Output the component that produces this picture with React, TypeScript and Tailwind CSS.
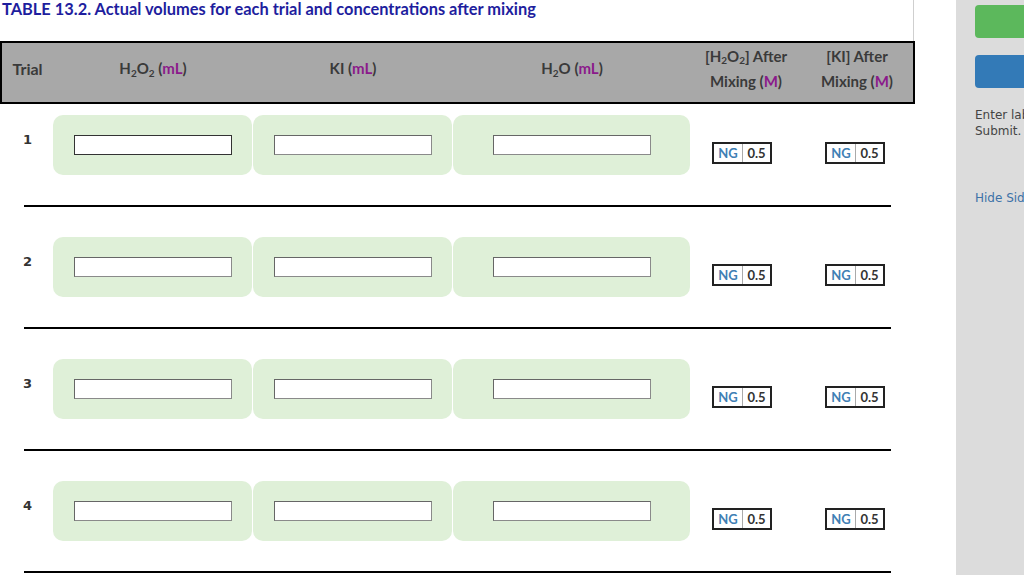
import React from "react";

const calibri = { fontFamily: "Lato, 'Open Sans', sans-serif" };

function Unit({ u }: { u: string }) {
  return (
    <>
      (<span className="text-[#8b1a8b]">{u}</span>)
    </>
  );
}

function Badge() {
  return (
    <div className="flex h-[22px] w-[60px] border-2 border-[#222] bg-white text-[13px] font-bold leading-[18px]" style={calibri}>
      <div className="flex w-[29px] items-center justify-center border-r border-[#aaa] text-[#3f7fb5]">NG</div>
      <div className="flex flex-1 items-center justify-center text-[#333]">0.5</div>
    </div>
  );
}

function GreenBox({ w, first }: { w: string; first?: boolean }) {
  return (
    <div className={`${w} flex h-[60px] justify-center rounded-[10px] bg-[#dff0d8] pt-[20px]`}>
      <div className={`h-[20px] w-[158px] border bg-white ${first ? "border-[#333]" : "border-[#8a8a8a] border-t-[#666] border-l-[#666]"}`} />
    </div>
  );
}

function Row({ n, first }: { n: number; first?: boolean }) {
  return (
    <div className={first ? "pt-[11px]" : "pt-[30px]"}>
      <div className="flex h-[60px]">
        <div className="w-[53px] pl-[23px] pt-[17px] text-[13px] font-bold leading-[16px] text-[#333]" style={{ fontFamily: "'DejaVu Sans', Verdana, sans-serif" }}>
          {n}
        </div>
        <div className="flex gap-[1px]">
          <GreenBox w="w-[199px]" first={first} />
          <GreenBox w="w-[199px]" />
          <GreenBox w="w-[237px]" />
        </div>
        <div className="ml-[22px] pt-[27px]">
          <Badge />
        </div>
        <div className="ml-[53px] pt-[27px]">
          <Badge />
        </div>
      </div>
      <div className="mt-[30px] ml-[24px] h-[2px] w-[867px] bg-black" />
    </div>
  );
}

export default function App() {
  return (
    <div className="flex h-[575px] w-[1024px] overflow-hidden bg-white">
      <div className="w-[956px] shrink-0">
        <div className="h-[41px] w-[914px] border-r border-[#cfcfcf] pl-[2px]">
          <div className="text-[16.4px] font-bold leading-[18px] text-[#1e1e9e]" style={calibri}>
            TABLE 13.2. Actual volumes for each trial and concentrations after mixing
          </div>
        </div>
        <div
          className="grid h-[63px] w-[915px] grid-cols-[51px_200px_200px_238px_110px_112px] items-center border-2 border-black bg-[#a8a8a8] pb-[8px] text-center text-[15px] font-bold leading-[25px] text-[#3a3a3a]"
          style={calibri}
        >
          <div className="text-[16px]">Trial</div>
          <div>
            H<sub className="text-[10px]">2</sub>O<sub className="text-[10px]">2</sub> <Unit u="mL" />
          </div>
          <div>
            KI <Unit u="mL" />
          </div>
          <div>
            H<sub className="text-[10px]">2</sub>O <Unit u="mL" />
          </div>
          <div>
            [H<sub className="text-[10px]">2</sub>O<sub className="text-[10px]">2</sub>] After
            <br />
            Mixing <Unit u="M" />
          </div>
          <div>
            [KI] After
            <br />
            Mixing <Unit u="M" />
          </div>
        </div>
        <Row n={1} first />
        <Row n={2} />
        <Row n={3} />
        <Row n={4} />
      </div>
      <div className="flex-1 overflow-hidden bg-[#dcdcdc] pl-[19px] pt-[5px]">
        <div className="h-[33px] w-[60px] rounded-[4px] bg-[#5cb85c]" />
        <div className="mt-[17px] h-[33px] w-[60px] rounded-[4px] bg-[#337ab7]" />
        <div
          className="mt-[19px] w-[60px] whitespace-nowrap text-[12px] leading-[16px] text-[#444]"
          style={{ fontFamily: "'DejaVu Sans', Verdana, sans-serif" }}
        >
          Enter lab
          <br />
          Submit.
        </div>
        <div
          className="mt-[51px] whitespace-nowrap text-[12px] leading-[16px] text-[#3d72a8]"
          style={{ fontFamily: "'DejaVu Sans', Verdana, sans-serif" }}
        >
          Hide Side
        </div>
      </div>
    </div>
  );
}
